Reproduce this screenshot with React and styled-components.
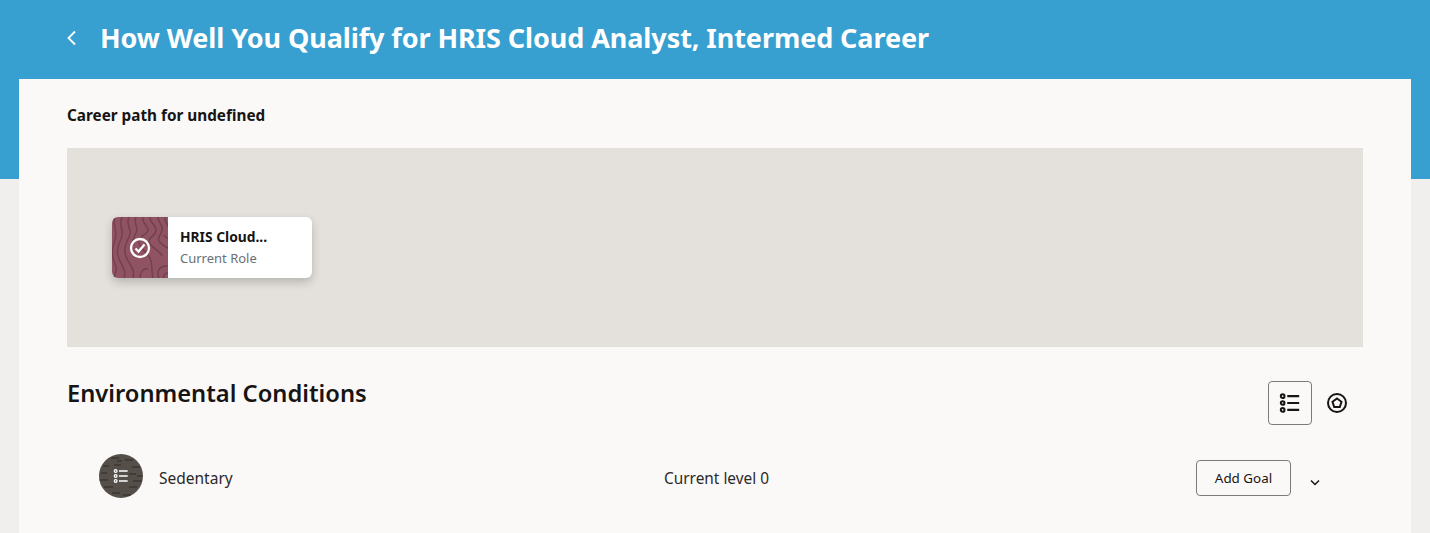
import React from 'react'
import styled, { createGlobalStyle } from 'styled-components'

const GlobalStyle = createGlobalStyle`
  html, body {
    margin: 0;
    padding: 0;
    height: 100%;
    overflow: hidden;
    font-family: "Noto Sans", "Open Sans", sans-serif;
    color: #161513;
  }
`

const Page = styled.div`
  height: 533px;
  overflow: hidden;
  background: linear-gradient(#389fd1 179px, #f1efed 179px);
`

const Header = styled.header`
  height: 75px;
  padding-left: 65px;
  display: flex;
  align-items: center;
  box-sizing: border-box;
  margin-bottom: 4px;
  color: #fff;
  svg {
    display: block;
    margin-right: 21px;
  }
  h1 {
    margin: 0;
    font-size: 27px;
    line-height: 36px;
    font-weight: 700;
    letter-spacing: -0.08px;
  }
`

const Card = styled.main`
  margin: 0 19px;
  padding: 25px 48px 0;
  height: 454px;
  box-sizing: border-box;
  background: #fbf9f8;
`

const PathTitle = styled.div`
  font-size: 15.3px;
  line-height: 22px;
  font-weight: 700;
`

const PathCanvas = styled.div`
  margin-top: 22px;
  height: 199px;
  padding: 69px 45px 0;
  box-sizing: border-box;
  background: #e4e1dc;
`

const Node = styled.div`
  width: 200px;
  height: 61px;
  display: flex;
  border-radius: 6px;
  overflow: hidden;
  background: #fff;
  box-shadow: 0 4px 10px rgba(0, 0, 0, 0.2);
`

const NodeBadge = styled.div`
  position: relative;
  width: 56px;
  flex: none;
  display: flex;
  align-items: center;
  justify-content: center;
  background: #8f5363;
  > svg:first-child {
    position: absolute;
    inset: 0;
  }
  > svg:last-child {
    position: relative;
  }
`

const NodeText = styled.div`
  padding: 10px 0 0 12px;
  b {
    display: block;
    font-size: 13.8px;
    line-height: 20px;
    font-weight: 700;
  }
  span {
    display: block;
    font-size: 13px;
    line-height: 23px;
    color: #6a6f76;
  }
`

const SectionHead = styled.div`
  display: flex;
  justify-content: space-between;
  align-items: flex-start;
  margin-top: 34px;
  h2 {
    margin: 0;
    font-size: 23.7px;
    line-height: 24px;
    font-weight: 600;
  }
`

const ViewTools = styled.div`
  display: flex;
  align-items: center;
  gap: 3px;
  padding-right: 4px;
`

const IconButton = styled.button`
  width: 44px;
  height: 44px;
  padding: 0;
  display: flex;
  align-items: center;
  justify-content: center;
  box-sizing: border-box;
  color: #161513;
  background: transparent;
  border-radius: 4px;
  border: 1px solid ${(p) => (p.$active ? '#7d7b78' : 'transparent')};
`

const Row = styled.div`
  display: grid;
  grid-template-columns: 565px 1fr auto 72px;
  align-items: center;
  height: 44px;
  margin-top: 29px;
  padding-left: 32px;
`

const RowName = styled.div`
  display: flex;
  align-items: center;
  gap: 16px;
  font-size: 15.5px;
  color: #2b2a28;
  span {
    padding-top: 4px;
  }
`

const Avatar = styled.div`
  position: relative;
  width: 44px;
  height: 44px;
  border-radius: 50%;
  overflow: hidden;
  display: flex;
  align-items: center;
  justify-content: center;
  background: #544f49;
  > svg:first-child {
    position: absolute;
    inset: 0;
  }
  > svg:last-child {
    position: relative;
  }
`

const Level = styled.div`
  padding-top: 4px;
  font-size: 15.4px;
  color: #2b2a28;
`

const AddGoal = styled.button`
  width: 95px;
  height: 36px;
  margin-top: 4px;
  padding: 0;
  font-family: inherit;
  font-size: 13.4px;
  font-weight: 400;
  color: #161513;
  background: transparent;
  border: 1px solid #7d7b78;
  border-radius: 4px;
`

const Expand = styled.div`
  display: flex;
  justify-content: flex-end;
  padding: 12px 41px 0 0;
`

const ListIcon = ({ size = 22, color = 'currentColor', width = 2.200 }) => (
  <svg width={size} height={size} viewBox="0 0 24 24" fill="none" stroke={color} strokeWidth={width}>
    <circle cx="4" cy="4.5" r="2" />
    <circle cx="4" cy="12" r="2" />
    <circle cx="4" cy="19.5" r="2" />
    <path d="M9 4.500h13M9 12h13M9 19.500h13" />
  </svg>
)

const Terrain = () => (
  <svg width="56" height="61" viewBox="0 0 56 61" fill="none" stroke="#74404e" strokeWidth="1.5">
    <path d="M3 0C0 8 6 14 3 23S-1 38 3 47 1 56 3 61" />
    <path d="M10 0C6 9 13 14 9 22S4 36 8 44s6 10 4 17" />
    <path d="M17 0c-4 8 4 12 0 20s-6 14-2 22 8 10 6 19" />
    <path d="M24 0c-3 6 3 10 0 16s-4 8-3 12" />
    <path d="M31 0c-2 6 5 8 5 13s-10 5-9 12 8 10 11 16 1 14 3 20" />
    <path d="M38 0c-1 5 6 7 6 13s-8 7-7 12 11 8 13 14" />
    <path d="M46 0c0 6 5 7 4 13s-5 7-3 11 6 5 9 7" />
    <path d="M53 0c-1 4 3 7 3 10" />
    <path d="M28 61c0-6 3-10 8-9" />
    <path d="M47 61c-3-7 1-13 9-12" />
    <path d="M52 61c-1-3 1-5 4-5" />
    <path d="M52 18c1 2 2 3 4 3" />
  </svg>
)

const Bark = () => (
  <svg width="44" height="44" viewBox="0 0 44 44" fill="none" stroke="#2f2b27" strokeWidth="1">
    <path d="M12 4h8M26 6h8M4 12h6M15 11h7M33 13h8M2 19h6M30 20h7M0 26h9M34 27h9M5 33h9M30 33h8M13 39h8M24 41h8M18 7h5M38 22h5" />
  </svg>
)

function App() {
  return (
    <Page>
      <GlobalStyle />
      <Header>
        <svg width="14" height="18" viewBox="0 0 14 18" fill="none" stroke="#fff" strokeWidth="1.8">
          <path d="M10 2.500L3.500 9l6.500 6.500" />
        </svg>
        <h1>How Well You Qualify for HRIS Cloud Analyst, Intermed Career</h1>
      </Header>
      <Card>
        <PathTitle>Career path for undefined</PathTitle>
        <PathCanvas>
          <Node>
            <NodeBadge>
              <Terrain />
              <svg width="22" height="22" viewBox="0 0 22 22" fill="none" stroke="#fff" strokeWidth="2.300">
                <circle cx="11" cy="11" r="9" />
                <path d="M6.500 11.500l3 3 6-7" />
              </svg>
            </NodeBadge>
            <NodeText>
              <b>HRIS Cloud...</b>
              <span>Current Role</span>
            </NodeText>
          </Node>
        </PathCanvas>
        <SectionHead>
          <h2>Environmental Conditions</h2>
          <ViewTools>
            <IconButton $active aria-label="List view">
              <ListIcon />
            </IconButton>
            <IconButton aria-label="Skills view">
              <svg width="24" height="24" viewBox="0 0 24 24" fill="none" stroke="currentColor" strokeWidth="2">
                <circle cx="12" cy="12" r="9" />
                <path d="M12 7.500l4.500 3.300-1.700 5.200H9.200l-1.700-5.200z" />
              </svg>
            </IconButton>
          </ViewTools>
        </SectionHead>
        <Row>
          <RowName>
            <Avatar>
              <Bark />
              <ListIcon size={16} color="#fff" width={2} />
            </Avatar>
            <span>Sedentary</span>
          </RowName>
          <Level>Current level 0</Level>
          <AddGoal>Add Goal</AddGoal>
          <Expand>
            <svg width="14" height="14" viewBox="0 0 14 14" fill="none" stroke="#161513" strokeWidth="1.5">
              <path d="M3 5.500l4 4 4-4" />
            </svg>
          </Expand>
        </Row>
      </Card>
    </Page>
  )
}

export default App
